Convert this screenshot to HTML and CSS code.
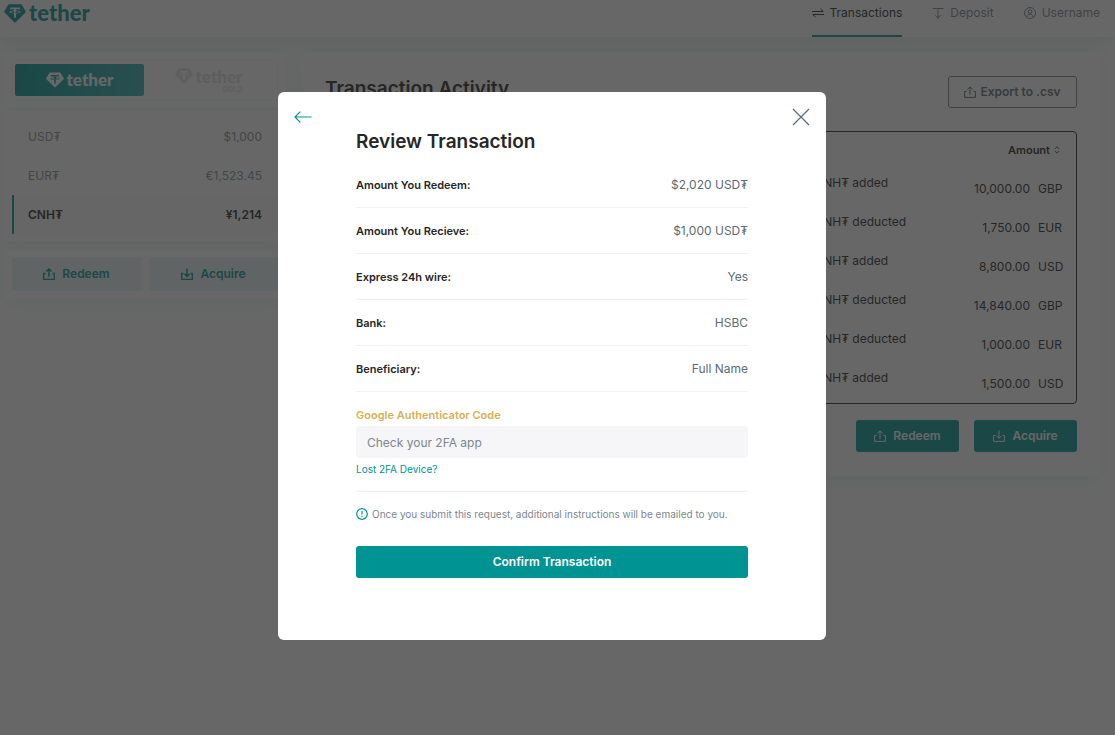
FILE: index.html
```html
<!DOCTYPE html>
<html lang="en">
<head>
<meta charset="utf-8">
<meta name="viewport" content="width=device-width, initial-scale=1">
<title>Review Transaction</title>
<link rel="stylesheet" href="styles.css">
</head>
<body>
<svg class="sprite" aria-hidden="true">
  <symbol id="gem" viewBox="0 0 22 19">
    <path fill="currentColor" fill-rule="evenodd" d="M5 .3h12q.6 0 .9.5l3.800 6.600q.3.600-.2 1.100l-9.800 9.700q-.7.600-1.400 0L.5 8.500Q0 8 .3 7.400L4.100.8Q4.400.3 5 .3ZM6 3.400v1.800h4v1.300C7 6.600 5.300 7.200 5.300 8s1.700 1.300 4.700 1.500v4.300h2V9.500c3-.2 4.700-.7 4.700-1.500S15 6.600 12 6.500V5.200h4V3.400ZM10 7.300v1.200h2V7.300c2.100.1 3.500.4 3.500.8 0 .500-1.900.8-4.500.8s-4.500-.3-4.500-.8c0-.4 1.400-.7 3.500-.8Z"/>
  </symbol>
  <symbol id="upload" viewBox="0 0 12 12">
    <path fill="none" stroke="currentColor" d="M2.500 5.500H.6v5.900h10.800V5.500H9.500M6 8.800V1M3.400 3.500 6 .9l2.600 2.600"/>
  </symbol>
  <symbol id="download" viewBox="0 0 12 12">
    <path fill="none" stroke="currentColor" d="M2.500 5.500H.6v5.900h10.800V5.500H9.500M6 .4v7.800M3.400 5.800 6 8.400l2.600-2.600"/>
  </symbol>
</svg>

<header class="topbar">
  <a class="brand" href="#"><svg class="brand-gem"><use href="#gem"/></svg><span>tether</span></a>
  <nav class="nav">
    <a class="nav-link active" href="#">
      <svg class="icon" viewBox="0 0 12 12"><path fill="none" stroke="currentColor" d="M0 4.500h11.200M8.500 1.800 11.300 4.500M12 7.500H.8M3.500 10.200.7 7.500"/></svg>
      <span>Transactions</span>
    </a>
    <a class="nav-link" href="#">
      <svg class="icon" viewBox="0 0 12 12"><path fill="none" stroke="currentColor" d="M.5 1.500h11M6 1.500v9.700M3 8.200l3 3 3-3"/></svg>
      <span>Deposit</span>
    </a>
    <a class="nav-link" href="#">
      <svg class="icon" viewBox="0 0 12 12"><g fill="none" stroke="currentColor"><circle cx="6" cy="6" r="5.500"/><circle cx="6" cy="4.600" r="1.800"/><path d="M2.700 10c.4-2 1.700-2.900 3.300-2.900S8.900 8 9.300 10"/></g></svg>
      <span>Username</span>
    </a>
  </nav>
</header>

<div class="page">
  <aside class="sidebar">
    <div class="card switch-card">
      <div class="switch">
        <button class="switch-tab selected" type="button"><svg class="tab-gem"><use href="#gem"/></svg><span class="wordmark">tether</span></button>
        <button class="switch-tab gold" type="button"><svg class="tab-gem"><use href="#gem"/></svg><span class="wordmark">tether<small>GOLD</small></span></button>
      </div>
    </div>
    <ul class="card balances">
      <li><span>USD₮</span><span>$1,000</span></li>
      <li><span>EUR₮</span><span>€1,523.45</span></li>
      <li class="current"><span>CNH₮</span><span>¥1,214</span></li>
    </ul>
    <div class="card side-actions">
      <button class="btn tint" type="button"><svg class="icon"><use href="#upload"/></svg>Redeem</button>
      <button class="btn tint" type="button"><svg class="icon"><use href="#download"/></svg>Acquire</button>
    </div>
  </aside>

  <main class="card activity">
    <div class="activity-head">
      <h1>Transaction Activity</h1>
      <button class="btn outline" type="button"><svg class="icon"><use href="#upload"/></svg>Export to .csv</button>
    </div>
    <div class="table-box">
      <table>
        <colgroup><col class="col-lead"><col><col class="col-amount"><col class="col-currency"></colgroup>
        <thead>
          <tr><th></th><th></th><th class="amount-head" colspan="2" scope="colgroup"><span>Amount</span><svg class="sort" viewBox="0 0 6 8"><path fill="none" stroke="currentColor" stroke-width=".8" d="M.8 3 3 .8 5.200 3M.8 5 3 7.200 5.200 5"/></svg></th></tr>
        </thead>
        <tbody>
          <tr><td></td><td class="note">CNH₮ added</td><td class="amount">10,000.00</td><td>GBP</td></tr>
          <tr><td></td><td class="note">CNH₮ deducted</td><td class="amount">1,750.00</td><td>EUR</td></tr>
          <tr><td></td><td class="note">CNH₮ added</td><td class="amount">8,800.00</td><td>USD</td></tr>
          <tr><td></td><td class="note">CNH₮ deducted</td><td class="amount">14,840.00</td><td>GBP</td></tr>
          <tr><td></td><td class="note">CNH₮ deducted</td><td class="amount">1,000.00</td><td>EUR</td></tr>
          <tr><td></td><td class="note">CNH₮ added</td><td class="amount">1,500.00</td><td>USD</td></tr>
        </tbody>
      </table>
    </div>
    <div class="activity-actions">
      <button class="btn solid" type="button"><svg class="icon"><use href="#upload"/></svg>Redeem</button>
      <button class="btn solid" type="button"><svg class="icon"><use href="#download"/></svg>Acquire</button>
    </div>
  </main>
</div>

<div class="overlay">
  <section class="modal" role="dialog" aria-modal="true" aria-labelledby="modal-title">
    <div class="modal-bar">
      <button class="icon-btn back" type="button" aria-label="Back"><svg viewBox="0 0 18 12" width="18" height="12"><path fill="none" stroke="currentColor" stroke-width="1.200" d="M17.500 6H1M6.300.7 1 6l5.300 5.300"/></svg></button>
      <button class="icon-btn close" type="button" aria-label="Close"><svg viewBox="0 0 18 18" width="18" height="18"><path fill="none" stroke="currentColor" stroke-width="1.200" d="m1 1 16 16M17 1 1 17"/></svg></button>
    </div>
    <form class="review">
      <h2 id="modal-title">Review Transaction</h2>
      <dl class="facts">
        <div><dt>Amount You Redeem:</dt><dd>$2,020 USD₮</dd></div>
        <div><dt>Amount You Recieve:</dt><dd>$1,000 USD₮</dd></div>
        <div><dt>Express 24h wire:</dt><dd>Yes</dd></div>
        <div><dt>Bank:</dt><dd>HSBC</dd></div>
        <div><dt>Beneficiary:</dt><dd>Full Name</dd></div>
      </dl>
      <div class="code">
        <label for="code">Google Authenticator Code</label>
        <input id="code" type="text" placeholder="Check your 2FA app">
        <a href="#">Lost 2FA Device?</a>
      </div>
      <p class="hint"><svg viewBox="0 0 12 12" width="12" height="12"><g fill="none" stroke="currentColor" stroke-width="1.200"><circle cx="6" cy="6" r="5.300"/><path d="M6 2.900v3.600M6 7.700v1.300"/></g></svg><span>Once you submit this request, additional instructions will be emailed to you.</span></p>
      <button class="confirm" type="submit">Confirm Transaction</button>
    </form>
  </section>
</div>
</body>
</html>
```

FILE: styles.css
```css
:root {
  --teal: #009393;
  --ink: #262626;
  --slate: #5b6b73;
  --muted: #7c878e;
  --line: #f0f1f2;
}

* { box-sizing: border-box; }

body {
  margin: 0;
  min-height: 100vh;
  background: #fff;
  color: var(--ink);
  font: 400 13px/16px Inter, "Liberation Sans", sans-serif;
}

button, input { font: inherit; color: inherit; }
button { border: 0; padding: 0; cursor: pointer; }
a { color: inherit; text-decoration: none; }
h1, h2 { margin: 0; font-size: 19px; line-height: 26px; font-weight: 600; }
.sprite { position: absolute; width: 0; height: 0; }
.icon { width: 12px; height: 12px; flex: none; }

/* Top bar */
.topbar {
  display: flex;
  justify-content: space-between;
  align-items: flex-start;
  height: 37px;
  padding: 0 15px 0 4px;
  box-shadow: 0 4px 20px rgba(0, 120, 120, .12);
}
.brand {
  display: flex;
  align-items: center;
  gap: 3px;
  height: 26px;
  color: var(--teal);
  font: 900 22px/24px Lato, sans-serif;
}
.brand-gem { width: 22px; height: 19px; }
.nav { display: flex; gap: 30px; }
.nav-link {
  display: flex;
  align-items: center;
  gap: 6px;
  height: 37px;
  padding-bottom: 9px;
  border-bottom: 2px solid transparent;
  color: var(--muted);
  font-size: 12px;
}
.nav-link.active { color: var(--ink); border-color: var(--teal); }

/* Page */
.page {
  display: flex;
  align-items: flex-start;
  gap: 16px;
  padding: 15px 15px 24px 4px;
}
.card {
  background: #fff;
  border-radius: 4px;
  box-shadow: 0 4px 20px rgba(0, 100, 120, .07);
}
.sidebar { flex: 0 0 282px; display: grid; gap: 2px; }
.switch-card { padding: 8px; }
.switch {
  display: flex;
  padding: 3px 4px 3px 2px;
  border: 1px solid #f4f5f6;
  border-radius: 3px;
}
.switch-tab {
  flex: 1;
  display: flex;
  align-items: center;
  justify-content: center;
  gap: 3px;
  height: 32px;
  border-radius: 2px;
  background: transparent;
  color: #dfe1e2;
}
.switch-tab.selected { background: linear-gradient(105deg, #009393, #30b0b0); color: #fff; }
.switch-tab.gold { align-items: flex-start; padding-top: 4px; }
.tab-gem { width: 18px; height: 16px; }
.wordmark { display: grid; font: 900 17px/18px Lato, sans-serif; }
.wordmark small { font: 700 7px/8px Inter, sans-serif; text-align: right; }

.balances { margin: 0; padding: 7px 8px; list-style: none; }
.balances li {
  display: flex;
  justify-content: space-between;
  align-items: center;
  height: 39px;
  padding: 0 16px 0 14px;
  border-left: 2px solid transparent;
  color: #888f94;
  font-size: 12px;
}
.balances .current { border-color: var(--teal); background: #fafafb; color: var(--ink); font-weight: 600; }

.side-actions { display: flex; gap: 8px; margin-top: 6px; padding: 8px; }
.side-actions .btn { flex: 1; height: 34px; }

.btn {
  display: inline-flex;
  align-items: center;
  justify-content: center;
  gap: 7px;
  width: 129px;
  height: 32px;
  border-radius: 3px;
  font-size: 12px;
  font-weight: 600;
}
.tint { background: #e8f5f5; color: var(--teal); }
.tint .icon { stroke-width: 1.500; }
.outline { gap: 4px; border: 1px solid var(--muted); background: transparent; color: var(--slate); }
.solid { width: 103px; background: var(--teal); color: #fff; }

/* Activity */
.activity { flex: 1; padding: 24px 23px; }
.activity-head { display: flex; justify-content: space-between; align-items: flex-start; }
.table-box { margin: 23px 0 16px; border: 1px solid var(--ink); border-radius: 4px; }
table { width: 100%; border-collapse: collapse; table-layout: fixed; }
.col-lead { width: 65%; }
.col-amount { width: 80px; }
.col-currency { width: 46px; }
th { height: 37px; padding: 0; }
td { height: 39px; padding: 0 0 0 8px; font-size: 12px; }
td.note { padding: 6px 0 0 1px; vertical-align: top; }
td.amount { padding: 0; text-align: right; }
th.amount-head { padding: 0 16px 2px 0; text-align: right; font-size: 11px; font-weight: 600; }
.sort { width: 6px; height: 8px; margin-left: 4px; }
.activity-actions { display: flex; justify-content: flex-end; gap: 15px; }

/* Modal */
.overlay {
  position: fixed;
  inset: 0;
  display: flex;
  align-items: center;
  justify-content: center;
  padding: 0 11px 3px 0;
  background: rgba(38, 38, 38, .7);
}
.modal {
  width: 548px;
  max-width: 100%;
  min-height: 548px;
  border-radius: 6px;
  background: #fff;
}
.modal-bar {
  display: flex;
  justify-content: space-between;
  align-items: center;
  padding: 16px 16px 0;
}
.icon-btn { display: flex; background: transparent; }
.back { color: var(--teal); }
.close { color: var(--slate); }
.review { display: flex; flex-direction: column; padding: 3px 78px 62px; }
.facts { margin: 7px 0 0; }
.facts > div {
  display: flex;
  justify-content: space-between;
  align-items: center;
  height: 46px;
  border-bottom: 1px solid var(--line);
}
dt { font-size: 11px; font-weight: 600; }
dd { margin: 0; color: var(--slate); font-size: 12px; }
.code {
  display: flex;
  flex-direction: column;
  align-items: flex-start;
  padding: 15px 0 14px;
  border-bottom: 1px solid var(--line);
}
.code label { color: #d4b153; font-size: 11px; font-weight: 600; }
.code input {
  width: 100%;
  height: 32px;
  margin: 3px 0;
  padding: 0 11px;
  border: 0;
  border-radius: 3px;
  background: #f6f6f8;
  font-size: 12px;
}
.code input::placeholder { color: var(--muted); opacity: 1; }
.code a { color: var(--teal); font-size: 10px; }
.hint {
  display: flex;
  align-items: center;
  gap: 4px;
  margin: 14px 0 24px;
  color: var(--muted);
  font-size: 10px;
}
.hint svg { flex: none; color: var(--teal); }
.confirm {
  height: 32px;
  border-radius: 3px;
  background: var(--teal);
  color: #fff;
  font-size: 12px;
  font-weight: 600;
}
```
